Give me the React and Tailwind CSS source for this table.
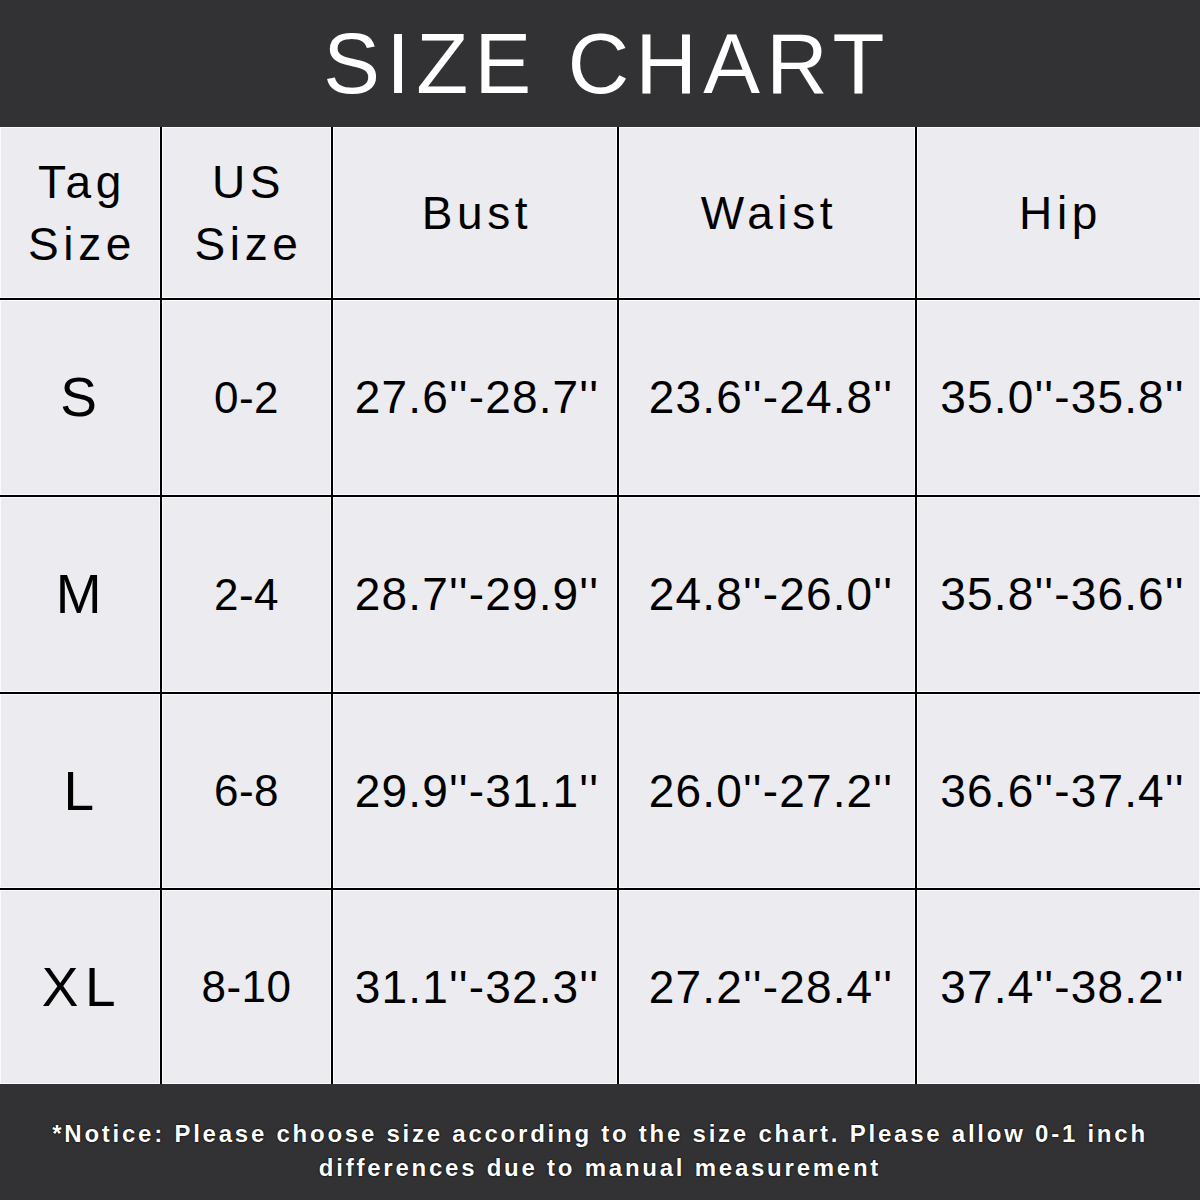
import React from 'react';

const headers = [
  ['Tag', 'Size'],
  ['US', 'Size'],
  ['Bust'],
  ['Waist'],
  ['Hip'],
];

const rows = [
  ['S', '0-2', "27.6''-28.7''", "23.6''-24.8''", "35.0''-35.8''"],
  ['M', '2-4', "28.7''-29.9''", "24.8''-26.0''", "35.8''-36.6''"],
  ['L', '6-8', "29.9''-31.1''", "26.0''-27.2''", "36.6''-37.4''"],
  ['XL', '8-10', "31.1''-32.3''", "27.2''-28.4''", "37.4''-38.2''"],
];

function Cell({ children, className = '' }) {
  return (
    <div
      className={
        'flex flex-col items-center justify-center bg-[#ecebf0] border border-[#fbfbfd] text-black ' +
        className
      }
    >
      {children}
    </div>
  );
}

export default function App() {
  return (
    <div className="w-[1200px] h-[1200px] bg-[#323234] font-['Liberation_Sans',Arial,sans-serif] overflow-hidden">
      {/* Title */}
      <div className="h-[127px] flex items-center justify-center">
        <h1 className="text-white text-[85px] leading-none tracking-[0.075em] pl-[14px]">
          SIZE CHART
        </h1>
      </div>

      {/* Table */}
      <div className="grid grid-cols-[160px_169px_284px_296px_283px] grid-rows-[171px_195px_195px_194px_194px] gap-[2px] bg-black">
        {headers.map((h, i) => (
          <Cell key={i} className="text-[46px] leading-[62px] tracking-[0.1em] pl-[4px]">
            {h.map((line) => (
              <span key={line}>{line}</span>
            ))}
          </Cell>
        ))}

        {rows.map((row) => (
          <React.Fragment key={row[0]}>
            <Cell className="text-[55px] tracking-[0.12em] pl-[4px]">{row[0]}</Cell>
            <Cell className="text-[44px] tracking-[0.01em]">{row[1]}</Cell>
            <Cell className="text-[46px] tracking-[0.025em] pl-[4px]">{row[2]}</Cell>
            <Cell className="text-[46px] tracking-[0.025em] pl-[8px]">{row[3]}</Cell>
            <Cell className="text-[46px] tracking-[0.025em] pl-[8px]">{row[4]}</Cell>
          </React.Fragment>
        ))}
      </div>

      {/* Notice */}
      <div className="h-[116px] flex items-center justify-center pt-[18px]">
        <p className="text-white font-bold text-[24px] leading-[34px] tracking-[0.115em] text-center [text-shadow:0_0_2px_#000,0_0_1px_#000]">
          *Notice: Please choose size according to the size chart. Please allow 0-1 inch
          <br />
          differences due to manual measurement
        </p>
      </div>
    </div>
  );
}
